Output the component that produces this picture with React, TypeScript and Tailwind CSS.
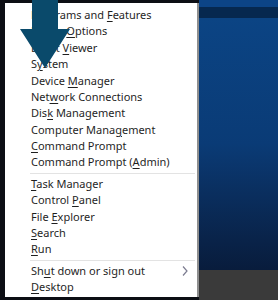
import React from 'react'

// Win+X quick-link menu, access keys marked with &
const groups: string[][] = [
  [
    'Programs and &Features',
    'Power &Options',
    'Event &Viewer',
    'S&ystem',
    'Device &Manager',
    'Net&work Connections',
    'Dis&k Management',
    'Computer Mana&gement',
    '&Command Prompt',
    'Command Prompt (&Admin)',
  ],
  ['&Task Manager', 'Control &Panel', 'File &Explorer', '&Search', '&Run'],
  ['Sh&ut down or sign out', '&Desktop'],
]

const Label = ({ text }: { text: string }) => {
  const i = text.indexOf('&')
  if (i < 0) return <span>{text}</span>
  return (
    <span>
      {text.slice(0, i)}
      <u className="underline-offset-[2px]">{text[i + 1]}</u>
      {text.slice(i + 2)}
    </span>
  )
}

const Row = ({ text, submenu }: { text: string; submenu?: boolean }) => (
  <div className="h-[16.4px] flex items-center justify-between pl-[26px] pr-[9px]">
    <Label text={text} />
    {submenu && (
      <svg width="6" height="10" viewBox="0 0 6 10" className="text-[#7c7c90]">
        <polyline points="1,0.5 5,5 1,9.5" fill="none" stroke="currentColor" strokeWidth="1.2" />
      </svg>
    )}
  </div>
)

const Separator = () => (
  <div className="h-[5px] flex items-center pl-[25px] pr-[2px]">
    <div className="h-px w-full bg-[#e3e3e3]" />
  </div>
)

export default function App() {
  return (
    <div
      className="relative w-[278px] h-[300px] flex overflow-hidden bg-[#0c0e14] text-[#1f1f1f] text-[11px]"
      style={{ fontFamily: '"Noto Sans", "Open Sans", sans-serif' }}
    >
      <div className="w-[5px] shrink-0" />

      {/* menu panel */}
      <div className="w-[194px] shrink-0 mt-[3px] mb-[3px] pt-[4px] bg-white border-r-2 border-[#8e8e8e]">
        {groups.map((g, gi) => (
          <React.Fragment key={gi}>
            {gi > 0 && <Separator />}
            {g.map((t) => (
              <Row key={t} text={t} submenu={t.startsWith('Sh&ut')} />
            ))}
          </React.Fragment>
        ))}
      </div>

      {/* desktop behind */}
      <div className="flex-1 flex flex-col">
        <div className="h-[7px] bg-[#0c4486]" />
        <div className="h-[11px] bg-[#06284f]" />
        <div className="flex-1 bg-gradient-to-b from-[#0b4484] via-[#0a3b76] to-[#081c3c]" />
        <div className="h-[30px] bg-[#3a3a3a]" />
      </div>

      {/* pointer arrow drawn over the menu */}
      <svg width="80" height="72" viewBox="0 0 80 72" className="absolute left-0 top-0">
        <polygon points="32,0 58,0 58,29 70,29 45,68 20,29 32,29" fill="#0a4a6b" />
      </svg>
    </div>
  )
}
